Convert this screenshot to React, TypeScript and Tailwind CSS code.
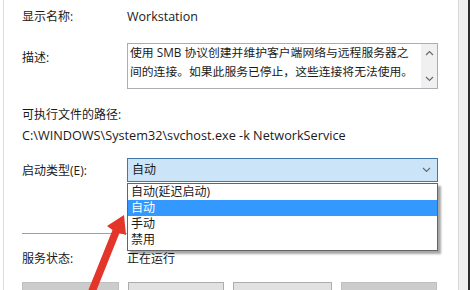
const font = "font-['Open_Sans','Noto_Sans_CJK_SC',sans-serif]"

const Chevron = ({ up = false }: { up?: boolean }) => (
  <svg width="9" height="6" viewBox="0 0 9 6" className={up ? 'rotate-180' : ''}>
    <path d="M1 1l3.5 3.5L8 1" fill="none" stroke="#6b6b6b" strokeWidth="1.2" />
  </svg>
)

const App = () => {
  return (
    <div className={`relative w-[475px] h-[290px] overflow-hidden bg-white flex text-[#1a1a1a] ${font}`}>
      <div className="w-[3px] shrink-0" />
      <div className="w-px shrink-0 bg-[#dcdcdc]" />

      {/* property page */}
      <div className="w-[454px] shrink-0 pl-[18px] pt-[8px] flex flex-col text-[12px] [&>*]:shrink-0">
        <div className="flex h-[18px] items-center">
          <span className="w-[105px]">显示名称:</span>
          <span className="text-[12.5px]">Workstation</span>
        </div>

        <div className="flex mt-[17px]">
          <span className="w-[105px] pt-[6px] leading-[18px]">描述:</span>
          <div className="w-[311px] h-[46px] border border-[#abadb3] flex">
            <p className="flex-1 pl-[2px] leading-[19px] -mt-[1px] text-[11.8px] whitespace-nowrap">
              使用 SMB 协议创建并维护客户端网络与远程服务器之
              <br />
              间的连接。如果此服务已停止，这些连接将无法使用。
            </p>
            <div className="w-[16px] bg-[#f0f0f0] flex flex-col items-center justify-between py-[6px]">
              <Chevron up />
              <Chevron />
            </div>
          </div>
        </div>

        <div className="mt-[17px] h-[18px] leading-[18px]">可执行文件的路径:</div>
        <div className="mt-[2px] h-[18px] leading-[18px] text-[12.7px]">C:\WINDOWS\System32\svchost.exe -k NetworkService</div>

        <div className="flex items-center mt-[14px]">
          <span className="w-[105px] pt-[2px]">启动类型(E):</span>
          <div className="w-[311px] h-[24px] bg-[#cce4f7] border border-[#4178a8] flex items-center justify-between pl-[4px] pr-[6px]">
            <span>自动</span>
            <Chevron />
          </div>
        </div>

        <div className="mt-[51px] w-[416px] h-px bg-[#a0a0a0]" />

        <div className="flex mt-[16px] h-[18px] items-center">
          <span className="w-[105px]">服务状态:</span>
          <span>正在运行</span>
        </div>

        <div className="flex mt-[14px] gap-[9px]">
          <div className="w-[97px] h-[23px] bg-[#cccccc] border border-[#bfbfbf]" />
          <div className="w-[96px] h-[23px] bg-[#e1e1e1] border border-[#adadad]" />
          <div className="w-[99px] h-[23px] bg-[#e1e1e1] border border-[#adadad]" />
          <div className="w-[96px] h-[23px] bg-[#cccccc] border border-[#bfbfbf]" />
        </div>
      </div>

      <div className="w-[10px] shrink-0 bg-[#f0f0f0] border-l border-[#d9d9d9]" />
      <div className="w-[2px] shrink-0 bg-[#2e2e2e]" />
      <div className="flex-1 bg-white" />

      {/* open combo list */}
      <div className="absolute left-[127px] top-[183px] w-[311px] bg-white border border-[#646464] shadow-[3px_3px_2px_rgba(0,0,0,0.35)] pb-[2px] text-[12px]">
        <div className="h-[16px] leading-[16px] pl-[3px]">自动(延迟启动)</div>
        <div className="h-[16px] leading-[16px] pl-[3px] bg-[#3399ff] text-white">自动</div>
        <div className="h-[16px] leading-[16px] pl-[3px]">手动</div>
        <div className="h-[16px] leading-[16px] pl-[3px]">禁用</div>
      </div>

      {/* red pointer arrow */}
      <svg className="absolute left-0 top-0" width="475" height="290" viewBox="0 0 475 290">
        <polygon
          points="124,215 126,235 119.5,233 95,294 88,291 112.5,230 107,226"
          fill="#e4352b"
        />
      </svg>
    </div>
  )
}

export default App
